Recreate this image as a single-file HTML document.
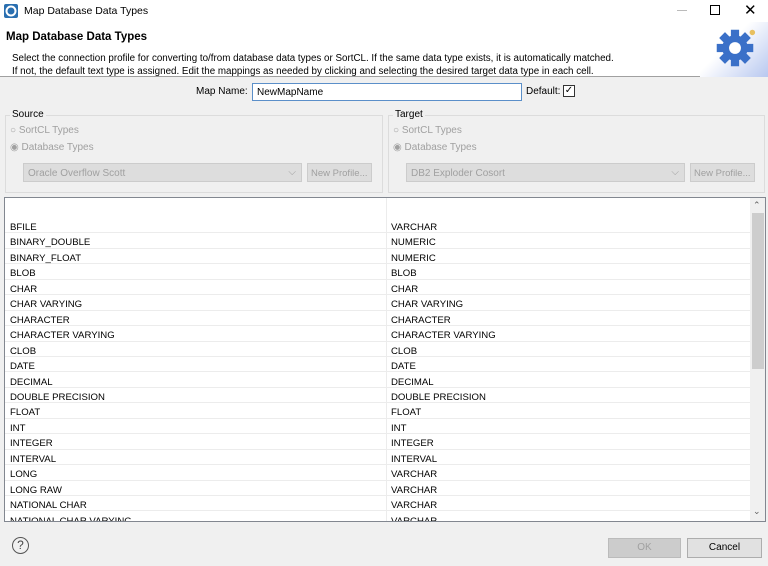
<!DOCTYPE html>
<html><head><meta charset="utf-8"><style>
*{margin:0;padding:0;box-sizing:border-box}
body{width:768px;height:566px;background:#f0f0f0;font-family:"Liberation Sans",sans-serif;font-size:10px;color:#000;position:relative;overflow:hidden}
.a{position:absolute;white-space:nowrap}
.dis{color:#a0a0a0}
.row{position:absolute;left:5px;width:745px;height:15.4px;border-bottom:1px solid #ececec;font-size:9.6px}
.row span{position:absolute;top:4px}
</style></head><body>
<div class="a" style="left:0;top:0;width:768px;height:77px;background:#fff;border-bottom:1px solid #a0a0a0"></div>
<div class="a" style="left:700px;top:22px;width:68px;height:55px;background:linear-gradient(135deg,#fff 40%,#b8c8f0)"></div>
<svg class="a" style="left:4px;top:4px" width="14" height="14"><rect x="0" y="0" width="14" height="14" rx="2" fill="#2a6fb0"/><circle cx="7" cy="7" r="4.5" fill="none" stroke="#fff" stroke-width="2"/></svg>
<div class="a" style="left:24px;top:5px;font-size:10.5px">Map Database Data Types</div>
<div class="a" style="left:677px;top:10px;width:10px;height:1px;background:#bbb"></div>
<div class="a" style="left:710px;top:5px;width:10px;height:10px;border:1px solid #000"></div>
<div class="a" style="left:744px;top:1px;font-size:15px">✕</div>
<div class="a" style="left:6px;top:31px;font-size:11.5px;font-weight:bold">Map Database Data Types</div>
<div class="a" style="left:12px;top:52px;font-size:9.8px;line-height:13px">Select the connection profile for converting to/from database data types or SortCL. If the same data type exists, it is automatically matched.<br>If not, the default text type is assigned. Edit the mappings as needed by clicking and selecting the desired target data type in each cell.</div>
<svg class="a" style="left:714px;top:27px" width="42" height="42" viewBox="-23 -23 46 46">
<g fill="#3a70c8"><circle r="14"/>
<g id="t"><rect x="-4.5" y="-20" width="9" height="10"/></g>
<use href="#t" transform="rotate(45)"/><use href="#t" transform="rotate(90)"/><use href="#t" transform="rotate(135)"/><use href="#t" transform="rotate(180)"/><use href="#t" transform="rotate(225)"/><use href="#t" transform="rotate(270)"/><use href="#t" transform="rotate(315)"/></g>
<circle r="6.5" fill="#fff"/><circle cx="19" cy="-17" r="3" fill="#e8c060"/></svg>
<div class="a" style="left:196px;top:86px">Map Name:</div>
<div class="a" style="left:252px;top:83px;width:270px;height:18px;background:#fff;border:1px solid #5b8fc9;padding:3px 4px">NewMapName</div>
<div class="a" style="left:526px;top:86px">Default:</div>
<div class="a" style="left:563px;top:85px;width:12px;height:12px;border:1px solid #333;background:#fff;font-size:10px;line-height:10px;text-align:center">✓</div>
<div class="a" style="left:5px;top:115px;width:378px;height:78px;border:1px solid #dcdcdc"></div>
<div class="a" style="left:388px;top:115px;width:377px;height:78px;border:1px solid #dcdcdc"></div>
<div class="a" style="left:10px;top:109px;background:#f0f0f0;padding:0 2px">Source</div>
<div class="a" style="left:393px;top:109px;background:#f0f0f0;padding:0 2px">Target</div>
<div class="a dis" style="left:10px;top:125px">○ SortCL Types</div>
<div class="a dis" style="left:10px;top:142px">◉ Database Types</div>
<div class="a dis" style="left:393px;top:125px">○ SortCL Types</div>
<div class="a dis" style="left:393px;top:142px">◉ Database Types</div>
<div class="a dis" style="left:23px;top:163px;width:279px;height:19px;background:#ddd;border:1px solid #ccc;padding:4px 4px">Oracle Overflow Scott<span style="position:absolute;right:5px;top:3px">⌵</span></div>
<div class="a dis" style="left:307px;top:163px;width:65px;height:19px;background:#ddd;border:1px solid #ccc;padding:4px 3px;font-size:9.5px">New Profile...</div>
<div class="a dis" style="left:406px;top:163px;width:279px;height:19px;background:#ddd;border:1px solid #ccc;padding:4px 4px">DB2 Exploder Cosort<span style="position:absolute;right:5px;top:3px">⌵</span></div>
<div class="a dis" style="left:690px;top:163px;width:65px;height:19px;background:#ddd;border:1px solid #ccc;padding:4px 3px;font-size:9.5px">New Profile...</div>
<div class="a" style="left:4px;top:197px;width:762px;height:325px;background:#fff;border:1px solid #828790;overflow:hidden">
<div class="a" style="left:381px;top:0;width:1px;height:325px;background:#ececec"></div>
<div class="a" style="left:745px;top:0;width:16px;height:325px;background:#f0f0f0"></div>
<div class="a" style="left:747px;top:15px;width:12px;height:156px;background:#cdcdcd"></div>
<div class="a" style="left:748px;top:2px;font-size:9px;color:#606060">⌃</div>
<div class="a" style="left:748px;top:308px;font-size:9px;color:#606060">⌄</div>
</div>
<div class="a" style="left:4px;top:197px;width:746px;height:324px;overflow:hidden">
<div id="rows"></div>
</div>
<script>
var d=[["BFILE","VARCHAR"],["BINARY_DOUBLE","NUMERIC"],["BINARY_FLOAT","NUMERIC"],["BLOB","BLOB"],["CHAR","CHAR"],["CHAR VARYING","CHAR VARYING"],["CHARACTER","CHARACTER"],["CHARACTER VARYING","CHARACTER VARYING"],["CLOB","CLOB"],["DATE","DATE"],["DECIMAL","DECIMAL"],["DOUBLE PRECISION","DOUBLE PRECISION"],["FLOAT","FLOAT"],["INT","INT"],["INTEGER","INTEGER"],["INTERVAL","INTERVAL"],["LONG","VARCHAR"],["LONG RAW","VARCHAR"],["NATIONAL CHAR","VARCHAR"],["NATIONAL CHAR VARYING","VARCHAR"]];
var h="";d.forEach(function(r,i){h+='<div class="row" style="left:1px;top:'+(21+i*15.45)+'px"><span style="left:5px">'+r[0]+'</span><span style="left:386px">'+r[1]+'</span></div>'});
document.getElementById("rows").innerHTML=h;
</script>
<div class="a" style="left:12px;top:537px;width:17px;height:17px;border:1px solid #555;border-radius:50%;text-align:center;font-size:12px;line-height:15px;color:#444">?</div>
<div class="a dis" style="left:608px;top:538px;width:73px;height:20px;background:#ccc;border:1px solid #bbb;text-align:center;line-height:18px">OK</div>
<div class="a" style="left:687px;top:538px;width:75px;height:20px;background:#e1e1e1;border:1px solid #adadad;text-align:center;line-height:18px">Cancel</div>
</body></html>
